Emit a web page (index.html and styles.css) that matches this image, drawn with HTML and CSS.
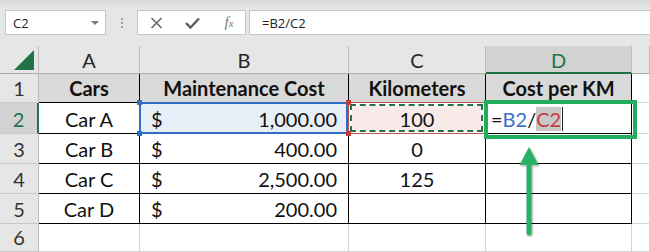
FILE: index.html
```html
<!DOCTYPE html>
<html lang="en">
<head>
    <meta charset="UTF-8">
    <meta name="viewport" content="width=device-width, initial-scale=1.0">
    <title>Cost per KM</title>
    <link rel="stylesheet" href="styles.css">
</head>
<body>
    <div class="ribbon">
        <div class="name-box"><span>C2</span><span class="drop"></span></div>
        <div class="grip"><i></i><i></i><i></i></div>
        <div class="fx-buttons">
            <svg width="13" height="12" viewBox="0 0 13 12"><path d="M1.5 1 L11.5 11 M11.5 1 L1.5 11" stroke="#6b6b6b" stroke-width="1.7" fill="none"/></svg>
            <svg width="15" height="12" viewBox="0 0 15 12"><path d="M1 6 L5.5 10.5 L14 1.5" stroke="#5c5c5c" stroke-width="2.4" fill="none"/></svg>
            <span class="fx"><i>f</i><i class="fx-x">x</i></span>
        </div>
        <div class="formula">=B2/C2</div>
    </div>

    <div class="sheet">
        <!-- column headers -->
        <div class="corner"><span class="select-all"></span></div>
        <div class="col-head">A</div>
        <div class="col-head">B</div>
        <div class="col-head">C</div>
        <div class="col-head active">D</div>
        <div class="col-head"></div>

        <!-- row 1 -->
        <div class="row-head">1</div>
        <div class="cell tbl title">Cars</div>
        <div class="cell tbl title">Maintenance Cost</div>
        <div class="cell tbl title">Kilometers</div>
        <div class="cell tbl title">Cost per KM</div>
        <div class="cell"></div>

        <!-- row 2 -->
        <div class="row-head active">2</div>
        <div class="cell tbl">Car A</div>
        <div class="cell tbl money ref-b"><span>$</span><span>1,000.00</span><i class="handle top"></i><i class="handle bottom"></i></div>
        <div class="cell tbl ref-c"><span class="ants"></span>100<i class="handle top"></i><i class="handle bottom"></i></div>
        <div class="cell tbl editing">=<span class="blue">B2</span>/<span class="red">C2</span><span class="caret"></span></div>
        <div class="cell"></div>

        <!-- row 3 -->
        <div class="row-head">3</div>
        <div class="cell tbl">Car B</div>
        <div class="cell tbl money"><span>$</span><span>400.00</span></div>
        <div class="cell tbl">0</div>
        <div class="cell tbl"></div>
        <div class="cell"></div>

        <!-- row 4 -->
        <div class="row-head">4</div>
        <div class="cell tbl">Car C</div>
        <div class="cell tbl money"><span>$</span><span>2,500.00</span></div>
        <div class="cell tbl">125</div>
        <div class="cell tbl"></div>
        <div class="cell"></div>

        <!-- row 5 -->
        <div class="row-head">5</div>
        <div class="cell tbl">Car D</div>
        <div class="cell tbl money"><span>$</span><span>200.00</span></div>
        <div class="cell tbl"></div>
        <div class="cell tbl"></div>
        <div class="cell"></div>

        <!-- row 6 -->
        <div class="row-head">6</div>
        <div class="cell"></div>
        <div class="cell"></div>
        <div class="cell"></div>
        <div class="cell"></div>
        <div class="cell"></div>

        <div class="callout"></div>
        <svg class="pointer" width="30" height="100" viewBox="0 0 30 100">
            <line x1="15" y1="20" x2="15" y2="92" stroke="#2bb067" stroke-width="5" stroke-linecap="round"/>
            <path d="M15 6 L24.5 24 L5.5 24 Z" fill="#2bb067"/>
        </svg>
    </div>
</body>
</html>
```

FILE: styles.css
```css
body {
    margin: 0;
    width: 650px;
    height: 252px;
    overflow: hidden;
    background: #e6e6e6;
    font-family: Lato, "Open Sans", sans-serif;
    color: #111;
}

/* formula bar */
.ribbon {
    height: 46px;
    box-sizing: border-box;
    padding-top: 10px;
    display: flex;
    align-items: flex-start;
    background: linear-gradient(#d8d8d8, #e6e6e6 9px);
}
.name-box {
    margin-left: 5px;
    width: 101px;
    height: 25px;
    box-sizing: border-box;
    background: #fff;
    border: 1px solid #c6c6c6;
    display: flex;
    align-items: center;
    justify-content: space-between;
    padding: 0 6px 0 7px;
    font: 13px "Open Sans", sans-serif;
    color: #222;
}
.drop {
    border-left: 4px solid transparent;
    border-right: 4px solid transparent;
    border-top: 4px solid #7a7a7a;
}
.grip {
    width: 31px;
    padding-top: 8px;
    display: flex;
    flex-direction: column;
    align-items: center;
    gap: 2px;
}
.grip i {
    width: 2px;
    height: 2px;
    background: #a3a3a3;
}
.fx-buttons {
    width: 109px;
    height: 25px;
    box-sizing: border-box;
    background: #fff;
    border: 1px solid #c6c6c6;
    display: grid;
    grid-template-columns: 36px 36px 36px;
    align-items: center;
    justify-items: center;
}
.fx {
    font-family: "Liberation Serif", serif;
    font-size: 15px;
    color: #777;
    padding-left: 2px;
}
.fx-x {
    font-size: 11px;
}
.formula {
    flex: 1;
    margin-left: 3px;
    height: 25px;
    box-sizing: border-box;
    background: #fff;
    border: 1px solid #c6c6c6;
    border-right: none;
    padding: 3px 0 0 12px;
    font: 13px "Open Sans", sans-serif;
    color: #222;
}

/* worksheet */
.sheet {
    position: relative;
    display: grid;
    grid-template-columns: 39px 101px 209px 137px 146px 18px;
    grid-template-rows: 28px 29px 31px 30px 30px 30px 28px;
}
.sheet > div {
    box-sizing: border-box;
}
.corner {
    border-right: 1px solid #bdbdbd;
    border-bottom: 1px solid #ababab;
    display: flex;
    align-items: flex-end;
    justify-content: flex-end;
    padding: 0 4px 3px 0;
}
.select-all {
    width: 0;
    height: 0;
    border-left: 20px solid transparent;
    border-bottom: 20px solid #217346;
}
.col-head {
    border-right: 1px solid #bdbdbd;
    border-bottom: 1px solid #ababab;
    display: flex;
    align-items: flex-end;
    justify-content: center;
    padding-bottom: 1px;
    font-size: 20px;
    color: #262626;
}
.col-head.active {
    background: #d2d2d2;
    border-bottom: 2px solid #217346;
    padding-bottom: 0;
    color: #217346;
}
.row-head {
    border-right: 1px solid #bdbdbd;
    border-bottom: 1px solid #c8c8c8;
    display: flex;
    align-items: flex-end;
    justify-content: center;
    padding-bottom: 2px;
    font-size: 20px;
    color: #333;
}
.row-head.active {
    background: #d2d2d2;
    border-right: 2px solid #217346;
    color: #217346;
}
.cell {
    position: relative;
    background: #fff;
    border-right: 1px solid #d4d4d4;
    border-bottom: 1px solid #d4d4d4;
    display: flex;
    align-items: flex-end;
    justify-content: center;
    padding-bottom: 2px;
    font-size: 20px;
    line-height: 1.2;
}
.cell.tbl {
    border-color: #000;
}
.title {
    background: #d9d9d9;
    font-weight: bold;
}
.money {
    justify-content: space-between;
    padding-left: 11px;
    padding-right: 11px;
}

/* formula references */
.ref-b {
    background: #e8eef8;
}
.ref-b::after {
    content: "";
    position: absolute;
    inset: -1px 0 -1px -1px;
    border: 2px solid #2e6ec4;
}
.ref-b .handle {
    background: #2e6ec4;
}
.ref-c {
    background: #f9eaea;
}
/* red frame with a white band inside it */
.ref-c::before {
    content: "";
    position: absolute;
    inset: -1px 0 -1px -1px;
    border: 1px solid #c0504d;
    box-shadow: inset 0 0 0 3px #fff;
}
/* copy marquee */
.ants {
    position: absolute;
    inset: 1px 2px 1px 1px;
    border: 2px dashed #217346;
}
.ref-c .handle {
    background: #c43c3c;
}
.handle {
    position: absolute;
    left: -3px;
    width: 5px;
    height: 5px;
    z-index: 2;
}
.handle.top {
    top: -3px;
}
.handle.bottom {
    bottom: -3px;
}

.editing {
    justify-content: flex-start;
    padding-left: 5px;
}
.blue {
    color: #3b6fc6;
}
.red {
    color: #c43c3c;
    background: #c8c8c8;
}
.caret {
    align-self: stretch;
    width: 1px;
    margin: 4px 0 0 1px;
    background: #222;
}

/* annotation */
.callout {
    position: absolute;
    left: 484px;
    top: 54px;
    width: 153px;
    height: 39px;
    box-sizing: border-box;
    border: 4px solid #24ad5c;
}
.pointer {
    position: absolute;
    left: 514px;
    top: 95px;
    filter: drop-shadow(1px 1px 1px rgba(0, 0, 0, 0.35));
}
```
